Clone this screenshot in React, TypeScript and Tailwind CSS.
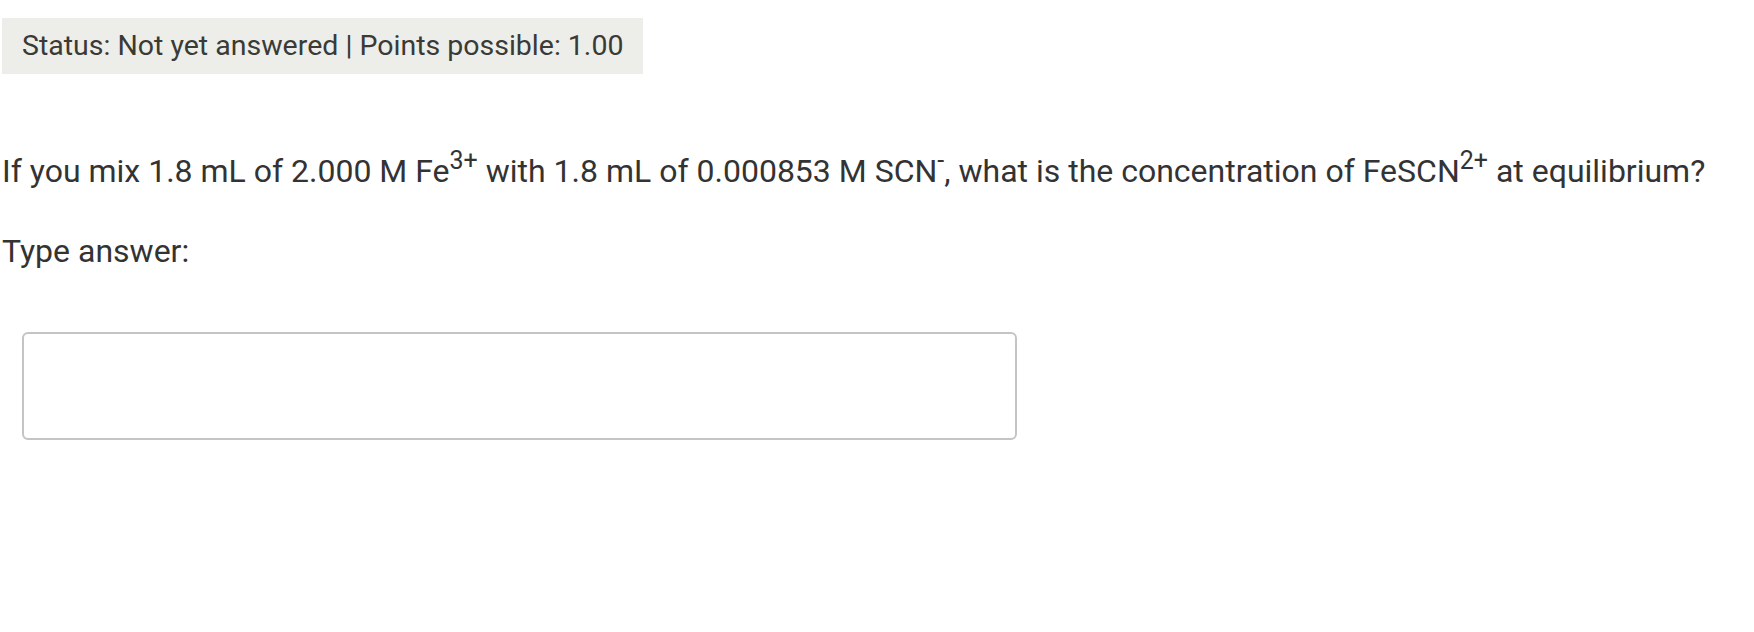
import React, { useState } from "react";

const App: React.FC = () => {
  const [answer, setAnswer] = useState("");

  return (
    <div className="min-h-screen bg-white text-[#333333] font-['Roboto',_'Liberation_Sans',_sans-serif]">
      <div className="pt-[18px] pl-[2px]">
        <div className="inline-flex items-center h-[56px] px-[20px] bg-[#edeeea] text-[28.5px] text-[#3a3a36]">
          Status: Not yet answered | Points possible: 1.00
        </div>
      </div>

      <p className="mt-[73px] pl-[2px] text-[32px] leading-[48px]">
        If you mix 1.8 mL of 2.000 M Fe<sup className="text-[25px] top-[-13px]">3+</sup> with 1.8 mL of 0.000853 M
        SCN<sup className="text-[25px] top-[-13px]">-</sup>, what is the concentration of FeSCN
        <sup className="text-[25px] top-[-13px]">2+</sup> at equilibrium?
      </p>

      <p className="mt-[32px] pl-[2px] text-[32px] leading-[48px]">Type answer:</p>

      <div className="mt-[57px] pl-[22px]">
        <textarea
          value={answer}
          onChange={(e) => setAnswer(e.target.value)}
          className="block w-[995px] h-[108px] border-2 border-[#c4c4c4] rounded-[6px] resize-none outline-none px-3 py-2 text-[24px]"
        />
      </div>
    </div>
  );
};

export default App;
